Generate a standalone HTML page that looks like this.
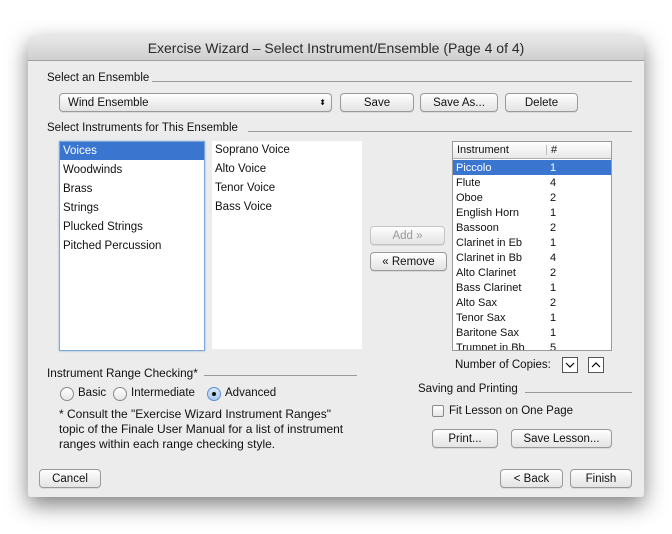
<!DOCTYPE html>
<html><head><style>
body{margin:0;width:672px;height:534px;background:#fff;position:relative;overflow:hidden;font-family:"Liberation Sans",sans-serif;font-size:11.5px;color:#111}
.a{position:absolute;white-space:nowrap}
#win{position:absolute;left:28px;top:36px;width:616px;height:461px;background:#ececec;border-radius:5px 5px 3px 3px;box-shadow:0 8px 22px rgba(0,0,0,.5);}
#tb{position:absolute;left:28px;top:36px;width:616px;height:24px;background:linear-gradient(#e8e8e8,#cfcfcf);border-radius:5px 5px 0 0;border-bottom:1px solid #a0a0a0;text-align:center;line-height:24px;font-size:14px;color:#2a2a2a}
.ln{position:absolute;height:1px;background:#9a9a9a}
.btn{position:absolute;height:17px;border:1px solid #9a9a9a;border-radius:4px;background:linear-gradient(#fff,#f0f0f0 50%,#e4e4e4);text-align:center;line-height:18px;box-shadow:0 1px 0 rgba(0,0,0,.08)}
.list{position:absolute;background:#fff}
.row{position:absolute;left:0;right:0;height:18px;line-height:19px;padding-left:3px}
.sel{background:#3a75d0;color:#fff}
.rad{position:absolute;width:12px;height:12px;border:1px solid #8a8a8a;border-radius:50%;background:linear-gradient(#fff,#e6e6e6)}
</style></head><body>
<div id="win"></div>
<div id="tb">Exercise Wizard – Select Instrument/Ensemble (Page 4 of 4)</div>

<div class="a" style="left:47px;top:72px">Select an Ensemble</div>
<div class="ln" style="left:152px;top:81px;width:480px"></div>
<div class="btn" style="left:59px;top:93px;width:271px;text-align:left;padding-left:0"><span style="margin-left:8px">Wind Ensemble</span><span style="position:absolute;right:5px;top:0;font-size:8px">⬍</span></div>
<div class="btn" style="left:340px;top:93px;width:72px">Save</div>
<div class="btn" style="left:420px;top:93px;width:76px">Save As...</div>
<div class="btn" style="left:505px;top:93px;width:71px">Delete</div>

<div class="a" style="left:47px;top:122px">Select Instruments for This Ensemble</div>
<div class="ln" style="left:248px;top:131px;width:384px"></div>

<div class="list" style="left:59px;top:141px;width:144px;height:208px;border:1px solid #7fa7d6;box-shadow:0 0 2px #8db3e2">
<div class="row sel" style="top:0">Voices</div>
<div class="row" style="top:19px">Woodwinds</div>
<div class="row" style="top:38px">Brass</div>
<div class="row" style="top:57px">Strings</div>
<div class="row" style="top:76px">Plucked Strings</div>
<div class="row" style="top:95px">Pitched Percussion</div>
</div>
<div class="list" style="left:212px;top:141px;width:150px;height:208px">
<div class="row" style="top:0">Soprano Voice</div>
<div class="row" style="top:19px">Alto Voice</div>
<div class="row" style="top:38px">Tenor Voice</div>
<div class="row" style="top:57px">Bass Voice</div>
</div>

<div class="btn" style="left:370px;top:226px;width:73px;color:#999;border-color:#c4c4c4">Add »</div>
<div class="btn" style="left:370px;top:252px;width:75px">« Remove</div>

<div class="list" style="left:452px;top:141px;width:158px;height:208px;border:1px solid #9a9a9a;overflow:hidden;font-size:11px">
<div style="position:absolute;left:0;top:0;right:0;height:16px;background:linear-gradient(#fff,#e8e8e8);border-bottom:1px solid #b0b0b0;line-height:17px"><span style="position:absolute;left:4px">Instrument</span><span style="position:absolute;left:93px;top:3px;width:1px;height:10px;background:#bbb"></span><span style="position:absolute;left:98px">#</span></div>
<div style="position:absolute;top:18px;left:0;right:0">
<div class="row sel" style="top:0;height:15px;line-height:16px">Piccolo<span style="position:absolute;left:97px">1</span></div>
<div class="row" style="top:15px;height:15px;line-height:16px">Flute<span style="position:absolute;left:97px">4</span></div>
<div class="row" style="top:30px;height:15px;line-height:16px">Oboe<span style="position:absolute;left:97px">2</span></div>
<div class="row" style="top:45px;height:15px;line-height:16px">English Horn<span style="position:absolute;left:97px">1</span></div>
<div class="row" style="top:60px;height:15px;line-height:16px">Bassoon<span style="position:absolute;left:97px">2</span></div>
<div class="row" style="top:75px;height:15px;line-height:16px">Clarinet in Eb<span style="position:absolute;left:97px">1</span></div>
<div class="row" style="top:90px;height:15px;line-height:16px">Clarinet in Bb<span style="position:absolute;left:97px">4</span></div>
<div class="row" style="top:105px;height:15px;line-height:16px">Alto Clarinet<span style="position:absolute;left:97px">2</span></div>
<div class="row" style="top:120px;height:15px;line-height:16px">Bass Clarinet<span style="position:absolute;left:97px">1</span></div>
<div class="row" style="top:135px;height:15px;line-height:16px">Alto Sax<span style="position:absolute;left:97px">2</span></div>
<div class="row" style="top:150px;height:15px;line-height:16px">Tenor Sax<span style="position:absolute;left:97px">1</span></div>
<div class="row" style="top:165px;height:15px;line-height:16px">Baritone Sax<span style="position:absolute;left:97px">1</span></div>
<div class="row" style="top:180px;height:15px;line-height:16px">Trumpet in Bb<span style="position:absolute;left:97px">5</span></div>
</div></div>

<div class="a" style="left:455px;top:359px">Number of Copies:</div>
<div class="a" style="left:562px;top:357px;width:14px;height:14px;border:1px solid #555;background:#fff"><svg width="14" height="14"><path d="M3 5 L7 9 L11 5" fill="none" stroke="#000" stroke-width="1.2"/></svg></div>
<div class="a" style="left:588px;top:357px;width:14px;height:14px;border:1px solid #555;background:#fff"><svg width="14" height="14"><path d="M3 9 L7 5 L11 9" fill="none" stroke="#000" stroke-width="1.2"/></svg></div>

<div class="a" style="left:47px;top:366px;font-size:11.8px">Instrument Range Checking*</div>
<div class="ln" style="left:204px;top:375px;width:153px"></div>
<div class="rad" style="left:60px;top:387px"></div><div class="a" style="left:78px;top:387px">Basic</div>
<div class="rad" style="left:113px;top:387px"></div><div class="a" style="left:131px;top:387px">Intermediate</div>
<div class="rad" style="left:207px;top:387px;border-color:#5a8fd0;background:linear-gradient(#d8e8fa,#a9c8ef)"></div><div class="a" style="left:212px;top:392px;width:4px;height:4px;border-radius:50%;background:#111"></div><div class="a" style="left:225px;top:387px">Advanced</div>
<div class="a" style="left:59px;top:407px;line-height:15px;font-size:12px">* Consult the "Exercise Wizard Instrument Ranges"<br>topic of the Finale User Manual for a list of instrument<br>ranges within each range checking style.</div>

<div class="a" style="left:418px;top:383px">Saving and Printing</div>
<div class="ln" style="left:525px;top:392px;width:107px"></div>
<div class="a" style="left:432px;top:405px;width:10px;height:10px;border:1px solid #8a8a8a;border-radius:2px;background:linear-gradient(#fff,#e6e6e6)"></div>
<div class="a" style="left:449px;top:405px">Fit Lesson on One Page</div>
<div class="btn" style="left:432px;top:429px;width:64px">Print...</div>
<div class="btn" style="left:511px;top:429px;width:99px">Save Lesson...</div>

<div class="btn" style="left:39px;top:469px;width:60px">Cancel</div>
<div class="btn" style="left:500px;top:469px;width:61px">&lt; Back</div>
<div class="btn" style="left:570px;top:469px;width:60px">Finish</div>
</body></html>
